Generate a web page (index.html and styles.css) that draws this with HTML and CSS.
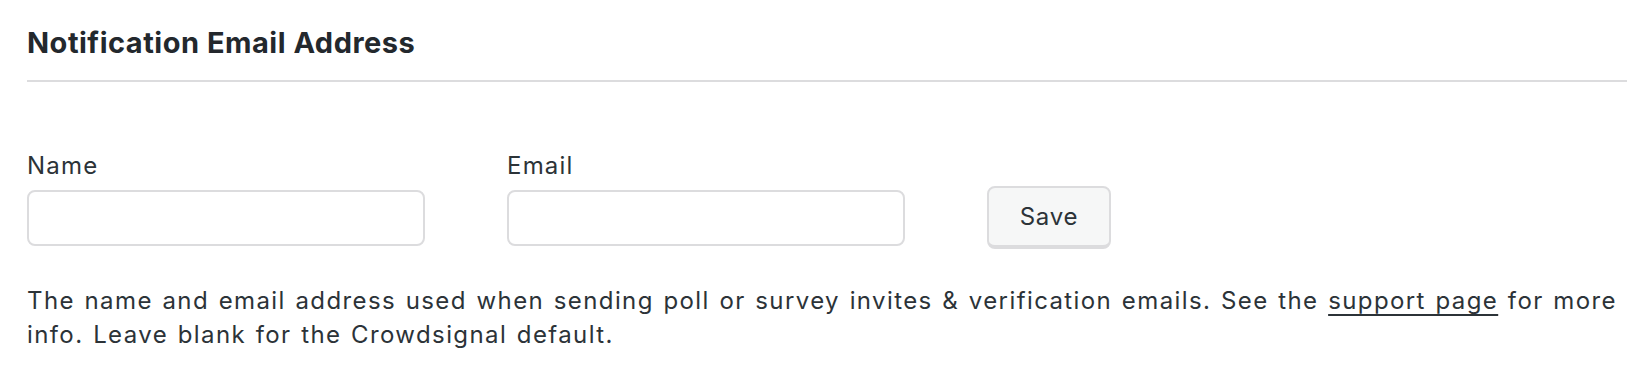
FILE: index.html
```html
<!DOCTYPE html>
<html>
<head>
<meta charset="utf-8">
<link rel="stylesheet" href="styles.css">
</head>
<body>
<div class="panel">
  <h2 class="title">Notification Email Address</h2>
  <div class="form-row">
    <div class="field">
      <label class="label" for="n">Name</label>
      <input class="input" id="n" type="text">
    </div>
    <div class="field">
      <label class="label" for="e">Email</label>
      <input class="input" id="e" type="text">
    </div>
    <button class="btn" type="button">Save</button>
  </div>
  <p class="help">The name and email address used when sending poll or survey invites &amp; verification emails. See the <a href="#" class="link">support page</a> for more info. Leave blank for the Crowdsignal default.</p>
</div>
</body>
</html>
```
FILE: styles.css
```css
html, body {
  margin: 0;
  padding: 0;
  background: #fff;
}
body {
  font-family: Inter, "Noto Sans", sans-serif;
  color: #2c3338;
}
.panel {
  width: 1600px;
  padding: 0 0 0 27px;
}
.title {
  margin: 0;
  padding-top: 24px;
  font-size: 29px;
  line-height: 38px;
  font-weight: 700;
  letter-spacing: 0.5px;
  color: #23282d;
  padding-bottom: 18px;
  border-bottom: 2px solid #dcdcde;
}
.form-row {
  display: flex;
  align-items: flex-end;
  gap: 82px;
  margin-top: 69px;
}
.field {
  display: flex;
  flex-direction: column;
  width: 398px;
}
.label {
  font-size: 24px;
  line-height: 30px;
  letter-spacing: 1.2px;
  margin-bottom: 9px;
}
.input {
  box-sizing: border-box;
  width: 398px;
  height: 56px;
  border: 2px solid #dcdcde;
  border-radius: 8px;
  background: #fff;
  margin: 0;
  margin-bottom: 3px;
}
.btn {
  box-sizing: border-box;
  width: 124px;
  height: 63px;
  background: #f6f7f7;
  border: 2px solid #dcdcde;
  border-bottom-width: 4px;
  border-radius: 8px;
  font-family: Inter, "Noto Sans", sans-serif;
  font-size: 24px;
  letter-spacing: 0.8px;
  color: #2c3338;
  padding: 0;
}
.help {
  margin: 35px 0 0;
  font-size: 24px;
  line-height: 34px;
  letter-spacing: 1.4px;
  word-spacing: 1.5px;
}
.link {
  color: #2c3338;
  text-decoration: underline;
  text-decoration-thickness: 2px;
  text-underline-offset: 5px;
}
```
